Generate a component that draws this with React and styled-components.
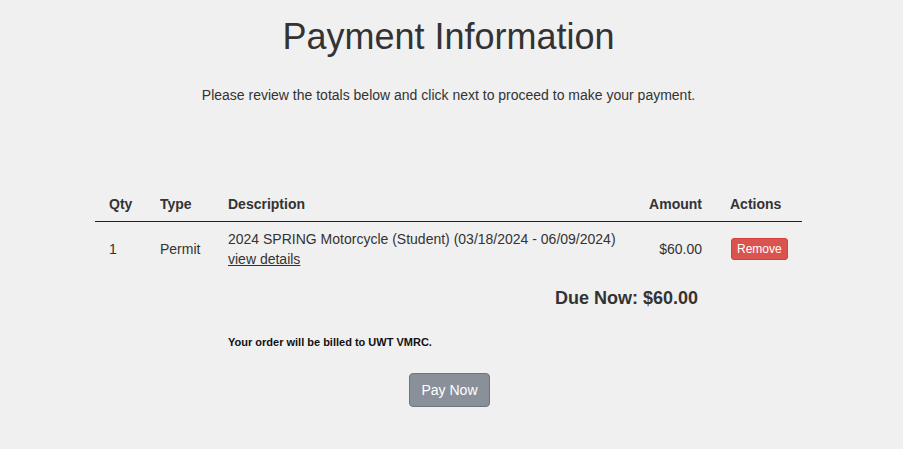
import React from "react";
import styled, { createGlobalStyle } from "styled-components";

const Global = createGlobalStyle`
  html, body { margin: 0; padding: 0; background: #f0f0f0; }
  body {
    font-family: "Liberation Sans", Arial, Helvetica, sans-serif;
    font-size: 14px;
    line-height: 1.42857;
    color: #333;
  }
`;

const Page = styled.div`
  display: flex;
  justify-content: center;
  padding: 0 6px 0 0;
`;

const Container = styled.div`
  width: 707px;
  display: flex;
  flex-direction: column;
  align-items: stretch;
`;

const Title = styled.h1`
  margin: 17px 0 0;
  font-size: 36px;
  font-weight: 400;
  line-height: 1.1;
  text-align: center;
  color: #333;
`;

const Lead = styled.p`
  margin: 29px 0 0;
  text-align: center;
  font-size: 14px;
`;

const Table = styled.table`
  margin-top: 80px;
  width: 100%;
  border-collapse: collapse;
  table-layout: fixed;
`;

const Th = styled.th`
  box-sizing: border-box;
  padding: 8px 14px 7px;
  text-align: ${(p) => p.$align || "left"};
  font-weight: 700;
  border-bottom: 1px solid #222;
  width: ${(p) => p.$w || "auto"};
  line-height: 20px;
`;

const Td = styled.td`
  padding: 7px 14px 7px;
  text-align: ${(p) => p.$align || "left"};
  vertical-align: middle;
  line-height: 20px;
  white-space: ${(p) => (p.$nowrap ? "nowrap" : "normal")};
`;

const DetailsLink = styled.a`
  color: #333;
  text-decoration: underline;
  cursor: pointer;
`;

const RemoveButton = styled.button`
  font-family: inherit;
  font-size: 12px;
  line-height: 1.5;
  padding: 1px 5px;
  color: #fff;
  background: #d9534f;
  border: 1px solid #d43f3a;
  border-radius: 3px;
  margin-left: 1px;
  cursor: pointer;
`;

const DueRow = styled.div`
  display: flex;
  justify-content: flex-end;
  padding: 11px 104px 0 0;
  font-size: 18px;
  font-weight: 700;
  line-height: 22px;
`;

const BilledNote = styled.div`
  margin: 26px 0 0 133px;
  font-size: 11px;
  font-weight: 700;
  color: #111;
`;

const Actions = styled.div`
  display: flex;
  justify-content: center;
  margin-top: 23px;
  padding-left: 2px;
`;

const PayButton = styled.button`
  font-family: inherit;
  font-size: 14px;
  line-height: 20px;
  padding: 6px 11px;
  height: 34px;
  color: #fff;
  background: #8a9099;
  border: 1px solid #6f757d;
  border-radius: 4px;
  cursor: not-allowed;
`;

export default function App() {
  return (
    <>
      <Global />
      <Page>
        <Container>
          <Title>Payment Information</Title>
          <Lead>Please review the totals below and click next to proceed to make your payment.</Lead>
          <Table>
            <thead>
              <tr>
                <Th $w="51px">Qty</Th>
                <Th $w="68px">Type</Th>
                <Th>Description</Th>
                <Th $w="90px" $align="right">Amount</Th>
                <Th $w="86px">Actions</Th>
              </tr>
            </thead>
            <tbody>
              <tr>
                <Td>1</Td>
                <Td>Permit</Td>
                <Td $nowrap>
                  2024 SPRING Motorcycle (Student) (03/18/2024 - 06/09/2024)
                  <br />
                  <DetailsLink>view details</DetailsLink>
                </Td>
                <Td $align="right">$60.00</Td>
                <Td>
                  <RemoveButton>Remove</RemoveButton>
                </Td>
              </tr>
            </tbody>
          </Table>
          <DueRow>Due Now: $60.00</DueRow>
          <BilledNote>Your order will be billed to UWT VMRC.</BilledNote>
          <Actions>
            <PayButton disabled>Pay Now</PayButton>
          </Actions>
        </Container>
      </Page>
    </>
  );
}
